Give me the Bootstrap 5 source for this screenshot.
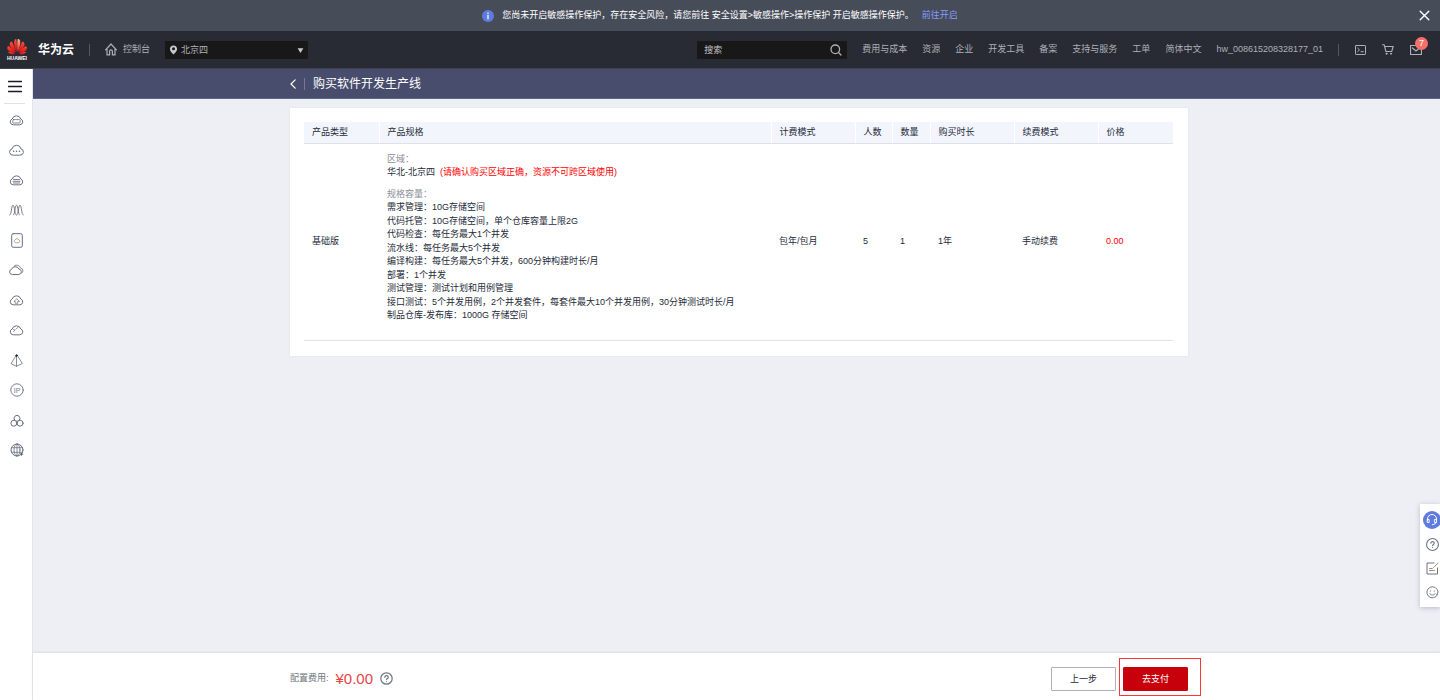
<!DOCTYPE html>
<html lang="zh-CN">
<head>
<meta charset="utf-8">
<meta name="viewport" content="width=device-width, initial-scale=1">
<title>购买软件开发生产线</title>
<link href="https://cdn.jsdelivr.net/npm/bootstrap@5.3.0/dist/css/bootstrap.min.css" rel="stylesheet">
<style>
  body{font-family:"Liberation Sans","Noto Sans CJK SC",sans-serif;font-size:9px;line-height:1.5;color:#252b3a;background:#eeeff5}
  svg{display:block;flex:none;fill:none;stroke:currentColor;stroke-linecap:round;stroke-linejoin:round}
  a{color:inherit;text-decoration:none}
  .notice{height:31px;background:#474c59;color:#fff}
  .notice a{color:#859bff}
  .notice .plain-btn{right:10px}
  .plain-btn{border:0;background:none;padding:0;color:inherit}
  .topbar{height:38px;background:#282b33;color:#adb0b8;border-bottom:1px solid #3d4152}
  .brand-name{font-size:12px;font-weight:700;color:#fff;width:51px}
  .divider{width:1px;height:12px;background:#555861}
  .home-link{margin-left:15px;gap:6px}
  .region{width:143px;margin-left:15px}
  .region select,.finder input{height:18px;width:100%;border:0;border-radius:1px;background:#181818;color:#adb0b8;font-size:9px;line-height:18px;appearance:none;outline-offset:1px}
  .region select{padding:0 20px 0 16px}
  .region .pin{left:4px;top:4px}
  .region .caret{right:4px;top:7px}
  .finder{width:150px}
  .finder input{padding:0 24px 0 7px}
  .finder input::placeholder{color:#c3c5cb;opacity:1}
  .finder button{right:5px;top:3px}
  .top-links{gap:15px;margin:1px 15px 0}
  .top-icons{gap:16px;padding-right:18px}
  .count-dot{top:-8px;left:5px;width:13px;height:13px;border-radius:50%;background:#f66f6a;color:#fff;line-height:13px;text-align:center}
  .rail{width:33px;background:#fff;border-right:1px solid #e3e4ec;color:#6a7080}
  .rail-menu{width:21px;height:35px;border-bottom:1px solid #dfe1e6;color:#191b2b}
  .rail-list{padding-top:1px}
  .rail-list a{height:30px;padding-left:1px}
  .title-bar{background:#484d6d;height:30px;border-bottom:1px solid #60658a;color:#fff}
  .title-bar h1{font-size:12px;line-height:18px;font-weight:400}
  .title-bar .divider{background:#74789a}
  .page-pad{padding-left:5px}
  .page-width{width:100%;max-width:898px;margin:0 auto}
  .panel-area{padding-top:9px}
  .panel{background:#fff;padding:14px 15px 15px 14px;box-shadow:0 0 2px #dfe1e9}
  .order{table-layout:fixed;width:100%;margin:0}
  .order th{height:21px;padding:0 0 0 8px;background:#f2f5fc;font-weight:400;vertical-align:middle;border-bottom:1px solid #dfe1e9;border-right:1px solid #fff}
  .order th:last-child{border-right:0}
  .order td{padding:0 8px;vertical-align:middle;border-bottom:1px solid #e1e2e9}
  .order .spec{padding:9px 8px 17px}
  .order .hint{color:#8a8e99}
  .alarm{color:#f00}
  .foot{background:#fff;height:47px;box-shadow:0 -1px 2px #d9dbe3}
  .fee-parts{gap:7px}
  .price-sum{font-size:15px;line-height:20px;color:#e54545}
  .btn-step{width:65px;height:24px;padding:0;border-radius:1px;font-size:9px;line-height:22px;border:1px solid #adb0b8;background:#fff;color:#252b3a}
  .btn-pay,.btn-pay:hover{background:#c7000b;border-color:#c7000b;color:#fff}
  .pay-wrap{margin-left:7px}
  .pay-frame{top:-9px;left:-4px;width:82px;height:38px;border:1px solid #ff3434;pointer-events:none}
  .helper{right:0;bottom:93px;width:20px;height:103px;background:#fff;box-shadow:0 1px 5px #b8bac4;color:#70747f;overflow:hidden;padding-top:4px;z-index:5}
  .helper a{height:24px;padding-left:6px}
  .helper a:first-child{padding-left:3px}
</style>
</head>
<body class="d-flex flex-column min-vh-100">

<div class="notice d-flex align-items-center position-relative" role="alert">
  <div class="d-flex align-items-center mx-auto">
    <svg width="12" height="12" viewBox="0 0 12 12" class="me-2"><circle cx="6" cy="6" r="6" fill="#5e7ce0" stroke="none"/><path d="M6 5.200v3.600M6 3v.2" stroke="#fff" stroke-width="1.300"/></svg>
    <span>您尚未开启敏感操作保护，存在安全风险，请您前往 安全设置&gt;敏感操作&gt;操作保护 开启敏感操作保护。</span>
    <a href="#" class="ms-2">前往开启</a>
  </div>
  <button class="plain-btn position-absolute" aria-label="关闭"><svg width="11" height="11" viewBox="0 0 11 11"><path d="M1.200 1.200l8.600 8.600M9.800 1.200L1.200 9.800" stroke-width="1.400"/></svg></button>
</div>

<header class="topbar d-flex align-items-center">
  <a href="#" class="d-flex align-items-center" aria-label="华为云">
    <svg width="38" height="24" viewBox="0 0 38 24" stroke="none">
      <defs><linearGradient id="petal" x1="0" y1="0" x2="0" y2="1"><stop offset="0" stop-color="#f4553f"/><stop offset=".5" stop-color="#e92a24"/><stop offset="1" stop-color="#cf101b"/></linearGradient><linearGradient id="petal-light" x1="0" y1="0" x2="0" y2="1"><stop offset="0" stop-color="#ffb38c"/><stop offset="1" stop-color="#e3241f"/></linearGradient></defs>
      <g fill="url(#petal)" stroke="none">
        <path d="M16.600 14.200C14.600 10 13.600 4.500 14.400 2.500c.5-1 1.200-1.300 1.900-1.400.8 3.600.8 8 .3 13.100z"/>
        <path fill="url(#petal-light)" d="M17.600 14.200c2-4.200 3.200-9.700 2.400-11.700-.5-1-1.400-1.300-2.200-1.400-.8 3.600-.7 8-.2 13.100z"/>
        <path d="M15.800 14.700C11.800 12 9.300 8 9.700 5.800c.2-1.200 1-2 2.100-2.300 1.500 2.300 3.200 6.500 4 11.200z"/>
        <path d="M18.400 14.700c4-2.700 6.500-6.700 6.100-8.900-.2-1.200-1-2-2.100-2.300-1.500 2.300-3.200 6.500-4 11.200z"/>
        <path d="M15.200 15.300C10.500 15 7.500 12.600 7.300 10.500c-.1-1.100.3-1.900.8-2.500 2.500 1.200 5.700 4.200 7.100 7.300z"/>
        <path d="M19 15.300c4.700-.3 7.700-2.700 7.900-4.800.1-1.100-.3-1.900-.8-2.500-2.500 1.200-5.700 4.200-7.100 7.300z"/>
        <path d="M15.100 16c-2.700 1-5.500.4-7.200-2.300 2.900.1 5.200 1 7.200 2.300zM19.100 16c2.700 1 5.500.4 7.200-2.300-2.900.1-5.200 1-7.200 2.300z"/>
      </g>
      <text x="7" y="22" font-family="Liberation Sans" font-size="5" font-weight="700" fill="#fff" stroke="none">HUAWEI</text>
    </svg>
    <span class="brand-name">华为云</span>
  </a>
  <span class="divider"></span>
  <a href="#" class="home-link d-flex align-items-center">
    <svg width="12" height="13" viewBox="0 0 12 13"><path d="M.6 6.800L6 1l5.400 5.800M2 5.700v6.200h2.600V8.300a1.400 1.400 0 0 1 2.800 0v3.600H10V5.700" stroke-width="1.200"/></svg>
    <span>控制台</span>
  </a>
  <div class="region position-relative">
    <select aria-label="区域"><option>北京四</option></select>
    <svg class="pin position-absolute" width="9" height="10" viewBox="0 0 9 10"><path d="M4.500.4C2.300.4.9 2 .9 3.900c0 2.300 2.600 4.500 3.600 5.600 1-1.100 3.600-3.300 3.600-5.600C8.100 2 6.700.4 4.500.4zm0 1.900a1.500 1.500 0 1 1 0 3 1.500 1.500 0 0 1 0-3z" fill="#c5c8d0" fill-rule="evenodd" stroke="none"/></svg>
    <svg class="caret position-absolute" width="7" height="5" viewBox="0 0 7 5"><path d="M.6.300h5.800L3.500 4.900z" fill="#c5c8d0" stroke="none"/></svg>
  </div>
  <div class="finder position-relative ms-auto">
    <input type="text" placeholder="搜索" aria-label="搜索">
    <button class="plain-btn position-absolute" aria-label="搜索"><svg width="12" height="12" viewBox="0 0 12 12"><circle cx="5.300" cy="5.300" r="4.300" stroke-width="1.300"/><path d="M8.500 8.500l2.500 2.500" stroke-width="1.300"/></svg></button>
  </div>
  <nav class="top-links d-flex text-nowrap">
    <a href="#">费用与成本</a><a href="#">资源</a><a href="#">企业</a><a href="#">开发工具</a><a href="#">备案</a><a href="#">支持与服务</a><a href="#">工单</a><a href="#">简体中文</a><a href="#">hw_008615208328177_01</a>
  </nav>
  <span class="divider me-3"></span>
  <div class="top-icons d-flex align-items-center">
    <a href="#" aria-label="命令行"><svg width="11" height="10" viewBox="0 0 11 10"><rect x=".5" y=".5" width="10" height="9" rx=".6"/><path d="M2.700 3.200l1.800 1.700-1.800 1.700M6 6.700h2.300"/></svg></a>
    <a href="#" aria-label="购物车"><svg width="12" height="11" viewBox="0 0 12 11"><path d="M.5.800h1.700l1.700 6.700h5.800l1.500-5H3" stroke-width="1.100"/><circle cx="4.500" cy="9.700" r=".6" fill="currentColor"/><circle cx="9" cy="9.700" r=".6" fill="currentColor"/></svg></a>
    <a href="#" class="position-relative" aria-label="消息"><svg width="12" height="10" viewBox="0 0 12 10"><rect x=".5" y=".5" width="11" height="9" stroke-width="1.200"/><path d="M2.500 3L6 6l3.500-3" stroke-width="1.200"/></svg><span class="count-dot position-absolute">7</span></a>
  </div>
</header>

<div class="d-flex flex-grow-1">
  <aside class="rail flex-shrink-0 d-flex flex-column">
    <button class="rail-menu plain-btn d-flex align-items-center justify-content-center mx-1" aria-label="菜单"><svg width="14" height="13" viewBox="0 0 14 13"><path d="M.6 1.500h12.800M.6 6.500h12.800M.6 11.500h12.800" stroke-width="1.400"/></svg></button>
    <nav class="rail-list">
      <a href="#" aria-label="云主机" class="d-flex align-items-center justify-content-center"><svg width="15" height="12" viewBox="0 0 15 12"><path d="M4 10.800A3 3 0 0 1 3.200 5 4.500 4.500 0 0 1 11.800 5a3 3 0 0 1-.8 5.800z"/><rect x="3.800" y="5.600" width="7.400" height="3.400" rx=".8" stroke-width=".8"/></svg></a>
      <a href="#" aria-label="云服务" class="d-flex align-items-center justify-content-center"><svg width="15" height="12" viewBox="0 0 15 12"><path d="M3.900 11.200A3.200 3.200 0 0 1 3 4.900 4.600 4.600 0 0 1 12 4.900a3.200 3.200 0 0 1-.9 6.300z"/><path d="M4.600 7.300h.1M7.500 7.300h.1M10.400 7.300h.1" stroke-width="1.500"/></svg></a>
      <a href="#" aria-label="裸金属" class="d-flex align-items-center justify-content-center"><svg width="15" height="12" viewBox="0 0 15 12"><path d="M4 10.800A3 3 0 0 1 3.200 5 4.500 4.500 0 0 1 11.800 5a3 3 0 0 1-.8 5.800z"/><path d="M4.500 5.500h6M4 7.300h7M4.500 9h6" stroke-width=".9"/></svg></a>
      <a href="#" aria-label="伸缩" class="d-flex align-items-center justify-content-center"><svg width="15" height="12" viewBox="0 0 15 12"><path d="M.8 11C2.700 11 2.300 1.200 4 1.200S5.500 11 7.500 11 9.300 1.200 11 1.200 12.300 11 14.200 11M4.500 11C6 11 5.800 1.200 7.500 1.200S9 11 10.500 11" stroke-width=".9"/></svg></a>
      <a href="#" aria-label="云硬盘" class="d-flex align-items-center justify-content-center"><svg width="12" height="15" viewBox="0 0 12 15"><rect x=".7" y=".7" width="10.600" height="13.600" rx="1.500" stroke="#5d7290"/><path d="M4.200 9.600a1.300 1.300 0 0 1-.2-2.500 2.100 2.100 0 0 1 4 0 1.300 1.300 0 0 1-.2 2.500z" stroke="#ba9773" stroke-width=".9"/></svg></a>
      <a href="#" aria-label="备份" class="d-flex align-items-center justify-content-center"><svg width="15" height="12" viewBox="0 0 15 12"><path d="M3 10.500A2.600 2.600 0 0 1 2.500 5.400 4 4 0 0 1 9.900 5a2.800 2.800 0 0 1 .3 5.500z"/><path d="M5.300 1.800A4 4 0 0 1 11.500 4a2.800 2.800 0 0 1 1.200 5.100" stroke-width=".8"/></svg></a>
      <a href="#" aria-label="上传" class="d-flex align-items-center justify-content-center"><svg width="15" height="12" viewBox="0 0 15 12"><path d="M4 10.800A3 3 0 0 1 3.200 5 4.500 4.500 0 0 1 11.800 5a3 3 0 0 1-.8 5.800z"/><path d="M7.500 5L4.900 7.500h1.300V9.300h2.600V7.500h1.300z" stroke-width=".7"/></svg></a>
      <a href="#" aria-label="监控" class="d-flex align-items-center justify-content-center"><svg width="15" height="12" viewBox="0 0 15 12"><path d="M4 10.800A3 3 0 0 1 3.200 5 4.500 4.500 0 0 1 11.800 5a3 3 0 0 1-.8 5.800z"/><path d="M4.700 7.500L6 6.100M7.300 5l1.500-1.500M4.600 5.500h.5" stroke-width=".9"/></svg></a>
      <a href="#" aria-label="网络" class="d-flex align-items-center justify-content-center"><svg width="13" height="13" viewBox="0 0 13 13"><path d="M6.500 1L1 9.600l5.500 2.700L12 9.600zM6.500 1v11.300" stroke-width=".8"/><circle cx="6.500" cy="1.600" r=".7" fill="#222" stroke="#222"/></svg></a>
      <a href="#" aria-label="弹性IP" class="d-flex align-items-center justify-content-center"><svg width="14" height="14" viewBox="0 0 14 14"><circle cx="7" cy="7" r="6.200" stroke-width=".9"/><text x="3.800" y="9.500" font-family="Liberation Sans" font-size="7" fill="#747aa0" stroke="none">IP</text></svg></a>
      <a href="#" aria-label="集群" class="d-flex align-items-center justify-content-center"><svg width="14" height="13" viewBox="0 0 14 13"><path d="M4.600 6.200A3 3 0 1 1 9.400 6.200"/><circle cx="3.900" cy="9.200" r="3"/><circle cx="10.100" cy="9.200" r="3"/><path d="M7 6.700v.2"/></svg></a>
      <a href="#" aria-label="域名" class="d-flex align-items-center justify-content-center"><svg width="14" height="14" viewBox="0 0 14 14"><circle cx="7" cy="7" r="6"/><ellipse cx="7" cy="7" rx="3" ry="6" stroke-width=".8"/><path d="M1.500 4.700h11M1.500 9.300h11M7 1v12" stroke-width=".8"/><path d="M10.300 9.800l3.300 1.200-1.500.7-.6 1.500z" fill="#4c5261" stroke="none"/></svg></a>
    </nav>
  </aside>

  <div class="d-flex flex-column flex-grow-1">
    <div class="title-bar page-pad d-flex">
      <div class="page-width d-flex align-items-center">
        <a href="#" aria-label="返回"><svg width="6" height="10" viewBox="0 0 6 10"><path d="M5.200.8L1 5l4.200 4.200" stroke-width="1.200"/></svg></a>
        <span class="divider mx-2"></span>
        <h1 class="m-0">购买软件开发生产线</h1>
      </div>
    </div>

    <main class="page-pad panel-area flex-grow-1 pb-3">
      <section class="page-width panel">
        <table class="order">
          <colgroup><col style="width:75px"><col><col style="width:84px"><col style="width:37px"><col style="width:38px"><col style="width:84px"><col style="width:84px"><col style="width:75px"></colgroup>
          <thead><tr><th>产品类型</th><th>产品规格</th><th>计费模式</th><th>人数</th><th>数量</th><th>购买时长</th><th>续费模式</th><th>价格</th></tr></thead>
          <tbody><tr>
            <td>基础版</td>
            <td class="spec">
              <div class="hint">区域：</div>
              <div class="mb-2">华北-北京四&nbsp; <span class="alarm">(请确认购买区域正确，资源不可跨区域使用)</span></div>
              <div class="hint">规格容量：</div>
              <div>需求管理：10G存储空间</div>
              <div>代码托管：10G存储空间，单个仓库容量上限2G</div>
              <div>代码检查：每任务最大1个并发</div>
              <div>流水线：每任务最大5个并发</div>
              <div>编译构建：每任务最大5个并发，600分钟构建时长/月</div>
              <div>部署：1个并发</div>
              <div>测试管理：测试计划和用例管理</div>
              <div>接口测试：5个并发用例，2个并发套件，每套件最大10个并发用例，30分钟测试时长/月</div>
              <div>制品仓库-发布库：1000G 存储空间</div>
            </td>
            <td>包年/包月</td><td>5</td><td>1</td><td>1年</td><td>手动续费</td><td class="alarm">0.00</td>
          </tr></tbody>
        </table>
      </section>
    </main>

    <footer class="foot page-pad d-flex sticky-bottom">
      <div class="page-width d-flex align-items-center pt-1">
        <div class="fee-parts d-flex align-items-center">
          <span class="text-secondary">配置费用:</span>
          <span class="price-sum">¥0.00</span>
          <button class="plain-btn text-secondary" aria-label="费用说明"><svg width="13" height="13" viewBox="0 0 13 13"><circle cx="6.500" cy="6.500" r="5.700" stroke-width="1.200"/><path d="M4.800 5.300c0-2.300 3.500-2.200 3.500-.1 0 1.300-1.700 1.300-1.700 2.400M6.600 9.500v.1" stroke-width="1.200"/></svg></button>
        </div>
        <button class="btn btn-step ms-auto">上一步</button>
        <div class="pay-wrap position-relative">
          <button class="btn btn-step btn-pay d-block">去支付</button>
          <span class="pay-frame position-absolute"></span>
        </div>
      </div>
    </footer>
  </div>
</div>

<nav class="helper position-fixed" aria-label="帮助">
  <a href="#" aria-label="客服" class="d-flex align-items-center"><svg width="18" height="18" viewBox="0 0 18 18"><circle cx="9" cy="9" r="9" fill="#5e7ce0" stroke="none"/><path d="M4.500 9.500V8a4.500 4.500 0 0 1 9 0v1.500M13.300 11c-.5 1.700-1.800 2.500-4 2.700" stroke="#fff"/><path d="M4.600 8.500h1.600v3H4.600zM11.800 8.500h1.600v3h-1.600z" stroke="#fff" stroke-width=".9"/></svg></a>
  <a href="#" aria-label="问题" class="d-flex align-items-center"><svg width="13" height="13" viewBox="0 0 14 14"><circle cx="7" cy="7" r="6.400" stroke-width="1.200"/><path d="M5.200 5.700c0-2.400 3.700-2.300 3.700-.1 0 1.300-1.800 1.400-1.800 2.600M7.100 10.200v.1" stroke-width="1.200"/></svg></a>
  <a href="#" aria-label="建议" class="d-flex align-items-center"><svg width="13" height="13" viewBox="0 0 13 13"><path d="M8 1H1v11h10.500V6"/><path d="M12 1L7.500 5.500M3.500 6.500h2.800M3.500 8.500H8.500" stroke="#a38d79"/></svg></a>
  <a href="#" aria-label="反馈" class="d-flex align-items-center"><svg width="13" height="13" viewBox="0 0 14 14"><path d="M12.500 9.200A6 6 0 1 1 13 6.500M12.800 6.800l-1.300 2.700"/><path d="M4.700 5.300v.3M9 5.300v.3M4.200 8.300c1 2 4.600 2 5.600 0"/></svg></a>
</nav>

<script src="https://cdn.jsdelivr.net/npm/bootstrap@5.3.0/dist/js/bootstrap.bundle.min.js"></script>
</body>
</html>
